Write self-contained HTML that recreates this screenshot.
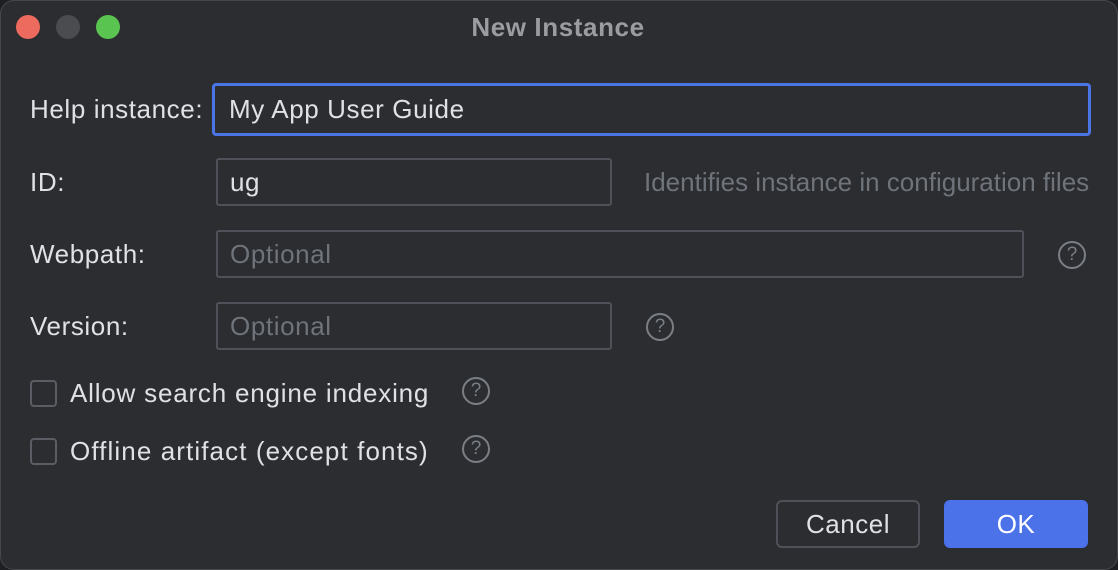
<!DOCTYPE html>
<html><head><meta charset="utf-8"><style>
*{box-sizing:border-box;margin:0;padding:0}
body{width:1118px;height:570px;background:#1e1f22;font-family:"Liberation Sans",sans-serif;overflow:hidden;position:relative}
.win{position:absolute;left:0;top:0;width:1118px;height:570px;background:#2b2d30;border-radius:14px;box-shadow:inset 0 0 0 1px #45474b}
.a{position:absolute}
.dot{position:absolute;top:15px;width:24px;height:24px;border-radius:50%}
.lbl{position:absolute;color:#dfe1e5;font-size:26px;letter-spacing:0.6px;line-height:30px}
.box{position:absolute;border:2px solid #4e5157;border-radius:3px;background:#2b2d30;color:#dfe1e5;font-size:26px;letter-spacing:0.6px;padding-left:12px;display:flex;align-items:center}
.ph{color:#6f737a}
.q{position:absolute;width:28px;height:28px;border:2px solid #7a7e85;border-radius:50%;color:#7a7e85;font-size:19px;text-align:center;line-height:24px}
.cb{position:absolute;left:30px;width:27px;height:27px;border:2px solid #5a5d63;border-radius:4px}
.btn{position:absolute;top:500px;height:48px;width:144px;border-radius:6px;font-size:26px;letter-spacing:0.5px;color:#dfe1e5;display:flex;align-items:center;justify-content:center}
</style></head><body>
<div class="win">
<div class="dot" style="left:16px;background:#ec6a5e"></div>
<div class="dot" style="left:56px;background:#4b4c4f"></div>
<div class="dot" style="left:96px;background:#5ac451"></div>
<div class="a" style="left:0;width:1116px;top:12px;text-align:center;color:#9a9ca1;font-weight:bold;font-size:26px;letter-spacing:0.6px;line-height:30px">New Instance</div>

<div class="lbl" style="left:30px;top:94px">Help instance:</div>
<div class="box" style="left:212px;top:83px;width:879px;height:53px;border:3px solid #4b74e6;padding-left:14px;border-radius:4px">My App User Guide</div>

<div class="lbl" style="left:30px;top:167px">ID:</div>
<div class="box" style="left:216px;top:158px;width:396px;height:48px">ug</div>
<div class="lbl" style="left:644px;top:167px;color:#6f737a;letter-spacing:0">Identifies instance in configuration files</div>

<div class="lbl" style="left:30px;top:239px">Webpath:</div>
<div class="box ph" style="left:216px;top:230px;width:808px;height:48px">Optional</div>
<div class="q" style="left:1058px;top:241px">?</div>

<div class="lbl" style="left:30px;top:311px">Version:</div>
<div class="box ph" style="left:216px;top:302px;width:396px;height:48px">Optional</div>
<div class="q" style="left:646px;top:313px">?</div>

<div class="cb" style="top:380px"></div>
<div class="lbl" style="left:70px;top:378px;letter-spacing:0.8px">Allow search engine indexing</div>
<div class="q" style="left:462px;top:377px">?</div>

<div class="cb" style="top:438px"></div>
<div class="lbl" style="left:70px;top:436px;letter-spacing:1.1px">Offline artifact (except fonts)</div>
<div class="q" style="left:462px;top:435px">?</div>

<div class="btn" style="left:776px;border:2px solid #4e5157">Cancel</div>
<div class="btn" style="left:944px;background:#4b72e8;color:#fff">OK</div>
</div>
</body></html>
